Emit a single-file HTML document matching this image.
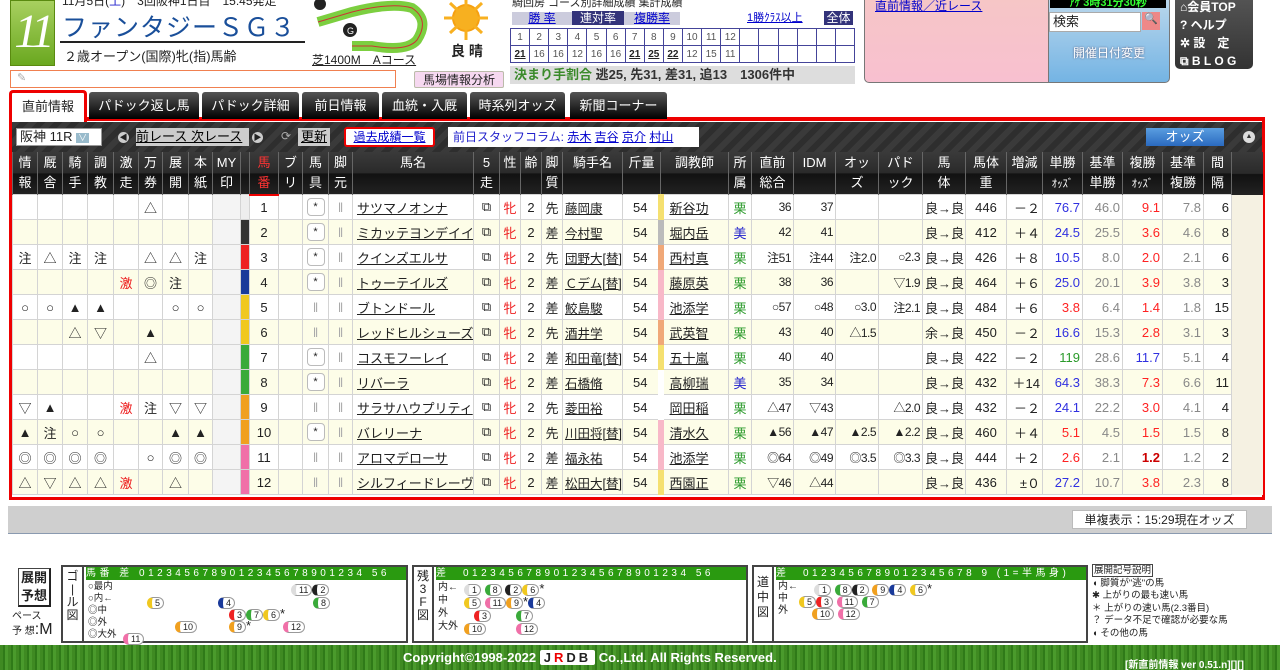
<!DOCTYPE html>
<html><head><meta charset="utf-8">
<style>
*{box-sizing:border-box;margin:0;padding:0}
body{width:1280px;height:670px;overflow:hidden;background:#fff;font-family:"Liberation Sans","Noto Sans CJK JP",sans-serif;font-size:13px;color:#222;position:relative}
.a{position:absolute}
u,a{color:#0000cc}
table.m{position:absolute;left:12px;top:152px;width:1250px;border-collapse:collapse;table-layout:fixed}
table.m th{background:linear-gradient(#3a3a3a,#2a2a2a 50%,#111 52%,#222);color:#fff;font-weight:normal;font-size:13px;line-height:20px;height:42px;border-left:1px solid #666;vertical-align:top;padding-top:1px}
table.m td{height:25px;border:1px solid #d4d4d4;text-align:center;font-size:13px;white-space:nowrap;overflow:hidden;padding:0 2px}
tr.e td{background:#fdfde8}
td.my{background:#f4f4f4!important}
td.n{font-size:16px;color:#222}
td.nm{text-align:left!important;text-decoration:underline;padding-left:4px!important}
td.jk{text-align:left!important;text-decoration:underline;font-size:12.5px!important}
td.tr{text-align:left!important;text-decoration:underline;border-left:6px solid transparent!important;padding-left:6px!important}
td.r{text-align:right!important}
td.s{font-size:12px!important;letter-spacing:-0.5px}
.gu{display:inline-block;width:18px;height:18px;border:1px solid #bbb;border-radius:4px;font-size:11px;line-height:17px;background:#fff}
.ft{color:#aaa;font-size:9px}
.f{color:#e22}
.k{color:#2a9a2a}
.mi{color:#22c}
.b{color:#3030e0}.gy{color:#888}.rd{color:#f22}
td.bgz{background:#f5f1e2!important;border:none!important}
.tab{position:absolute;top:92px;height:27px;background:linear-gradient(#555,#222 60%,#000);color:#fff;font-size:13px;text-align:center;line-height:27px;border-radius:3px 3px 0 0}
.pill{display:inline-block;height:12px;border-radius:6px;border:1px solid #999;font-size:9px;line-height:10px;padding:0 3px;background:#fff;vertical-align:middle}
.gh{background:#2a9a10;color:#fff;font-size:10px;height:13px;line-height:13px;letter-spacing:3.5px;white-space:nowrap;overflow:hidden}
.panel{position:absolute;top:565px;height:78px;border:2px solid #444;background:#fff}
table.st{position:absolute;left:510px;top:28px;border-collapse:collapse;width:345px;table-layout:fixed;font-size:10px;color:#555}
table.st td{border:1px solid #449;text-align:center;height:17px;padding:0}
table.st td.bd{color:#222;font-weight:bold;text-decoration:underline}
</style></head><body>

<!-- race header -->
<div class="a" style="left:10px;top:0;width:45px;height:66px;background:linear-gradient(#a8d060,#6aa820);border:1px solid #5a8a10;color:#fff;font-size:48px;font-style:italic;text-align:center;line-height:62px;font-family:'Liberation Serif',serif;letter-spacing:-4px">11</div>
<div class="a" style="left:62px;top:-8px;font-size:12px">11月5日(<span style="color:#22c">土</span>)　3回阪神1日目　15:45発走</div>
<div class="a" style="left:62px;top:8px;font-size:25px;color:#1a4f9a;letter-spacing:1px">ファンタジーＳＧ３</div>
<div class="a" style="left:60px;top:41px;width:245px;height:2px;background:#222"></div>
<div class="a" style="left:64px;top:46px;font-size:13px">２歳オープン(国際)牝(指)馬齢</div>
<svg class="a" style="left:312px;top:0" width="122" height="56"><path d="M6 22 L40 12 Q80 2 100 8 Q118 20 105 40 Q95 52 60 46 L40 46" fill="none" stroke="#7ccf40" stroke-width="10"/><path d="M6 22 L40 12 Q80 2 100 8 Q118 20 105 40 Q95 52 60 46 L40 46" fill="none" stroke="#c33" stroke-width="1"/><circle cx="8" cy="4" r="6" fill="#222"/><circle cx="38" cy="30" r="7" fill="#222"/><text x="35" y="34" fill="#fff" font-size="9">G</text></svg>
<div class="a" style="left:312px;top:51px;font-size:12px;text-decoration:underline">芝1400M　Aコース</div>
<svg class="a" style="left:439px;top:0" width="55" height="44"><circle cx="27" cy="18" r="14" fill="#f6a010"/><g stroke="#f8b020" stroke-width="3"><line x1="27" y1="0" x2="27" y2="40"/><line x1="5" y1="18" x2="49" y2="18"/><line x1="11" y1="3" x2="43" y2="33"/><line x1="43" y1="3" x2="11" y2="33"/></g><circle cx="27" cy="18" r="12" fill="#f7b020"/></svg>
<div class="a" style="left:451px;top:41px;font-size:14px;font-weight:bold">良 晴</div>
<div class="a" style="left:10px;top:70px;width:386px;height:18px;border:1px solid #f08050;color:#aaa;font-size:11px;padding-left:6px">✎</div>
<div class="a" style="left:414px;top:71px;width:90px;height:17px;background:#f6d8f0;border:1px solid #bba;font-size:12px;text-align:center;line-height:16px;border-radius:2px">馬場情報分析</div>

<!-- stats -->
<div class="a" style="left:512px;top:-6px;font-size:11px">騎回房 コース別詳細成績 集計成績</div>
<div class="a" style="left:512px;top:12px;width:60px;height:13px;background:#ccd;font-size:12px;text-align:center;line-height:13px"><u>勝 率</u></div>
<div class="a" style="left:572px;top:11px;width:52px;height:14px;background:#33337a;color:#fff;font-size:12px;text-align:center;line-height:14px">連対率</div>
<div class="a" style="left:624px;top:12px;width:56px;height:13px;background:#ccd;font-size:12px;text-align:center;line-height:13px"><u>複勝率</u></div>
<div class="a" style="left:747px;top:9px;font-size:11px"><u>1勝ｸﾗｽ以上</u></div>
<div class="a" style="left:824px;top:11px;width:29px;height:14px;background:#33337a;color:#fff;font-size:12px;text-align:center;line-height:14px">全体</div>
<table class="st">
<tr><td>1</td><td>2</td><td>3</td><td>4</td><td>5</td><td>6</td><td>7</td><td>8</td><td>9</td><td>10</td><td>11</td><td>12</td><td></td><td></td><td></td><td></td><td></td><td></td></tr>
<tr><td class="bd">21</td><td>16</td><td>16</td><td>12</td><td>16</td><td>16</td><td class="bd">21</td><td class="bd">25</td><td class="bd">22</td><td>12</td><td>15</td><td>11</td><td></td><td></td><td></td><td></td><td></td><td></td></tr></table>
<div class="a" style="left:510px;top:66px;width:345px;height:18px;background:#ddd;font-size:13px;line-height:18px;padding-left:4px;font-weight:bold;color:#333"><span style="color:#3a8a2a">決まり手割合</span> 逃25, 先31, 差31, 追13　1306件中</div>

<!-- right panels -->
<div class="a" style="left:864px;top:-4px;width:185px;height:87px;background:linear-gradient(#f6c6c6,#f8c0d0);border:1px solid #777;border-radius:0 0 0 5px;font-size:12px;padding-left:10px"><u>直前情報／近レース</u></div>
<div class="a" style="left:1048px;top:-4px;width:122px;height:87px;background:linear-gradient(#bcd8ec,#74b4e4);border:1px solid #777;border-radius:0 0 5px 0"></div>
<div class="a" style="left:1050px;top:-6px;width:116px;height:14px;background:#000;color:#3f3;font-size:11px;text-align:center;font-weight:bold">ｱｹ 3時31分30秒</div>
<div class="a" style="left:1049px;top:12px;width:92px;height:20px;background:#fff;border:1px solid #aaa;font-size:13px;padding-left:3px;line-height:18px">検索</div>
<div class="a" style="left:1142px;top:12px;width:18px;height:18px;background:#e88;color:#fff;font-size:11px;text-align:center">🔍</div>
<div class="a" style="left:1050px;top:44px;width:118px;text-align:center;font-size:12px;color:#fff;text-shadow:0 0 2px #557">開催日付変更</div>
<div class="a" style="left:1175px;top:-4px;width:78px;height:73px;background:linear-gradient(#555,#333);border-radius:0 0 5px 5px;color:#fff;font-size:12px;font-weight:bold;line-height:18px;padding:2px 0 0 5px">⌂会員TOP<br>? ヘルプ<br>✲ 設　定<br>⧉ B L O G</div>

<!-- tabs -->
<div class="a" style="left:85px;top:117px;width:1180px;height:4px;background:#e00"></div>
<div class="a" style="left:9px;top:90px;width:78px;height:32px;border:3px solid #e00;border-bottom:none;background:#fff;border-radius:4px 4px 0 0;font-size:13px;text-align:center;line-height:28px">直前情報</div>
<div class="tab" style="left:89px;width:110px">パドック返し馬</div>
<div class="tab" style="left:202px;width:97px">パドック詳細</div>
<div class="tab" style="left:302px;width:77px">前日情報</div>
<div class="tab" style="left:382px;width:85px">血統・入厩</div>
<div class="tab" style="left:470px;width:95px">時系列オッズ</div>
<div class="tab" style="left:570px;width:97px">新聞コーナー</div>

<!-- main box -->
<div class="a" style="left:9px;top:119px;width:1256px;height:381px;border:3px solid #e00;border-top:none"></div>
<div class="a" style="left:12px;top:122px;width:1250px;height:30px;background:repeating-linear-gradient(135deg,#3a3a3a 0 6px,#2e2e2e 6px 12px)"></div>
<div class="a" style="left:16px;top:128px;width:86px;height:18px;background:#fff;border:1px solid #999;font-size:13px;line-height:16px;padding-left:3px">阪神 11R <span style="background:#9bc;color:#fff;font-size:9px;padding:0 2px">∨</span></div>
<div class="a" style="left:118px;top:132px;width:11px;height:11px;border-radius:6px;background:#ccc;font-size:8px;text-align:center;line-height:11px">◀</div>
<div class="a" style="left:136px;top:128px;width:113px;height:18px;background:#ccc;font-size:13px;line-height:18px;text-decoration:underline;color:#000">前レース 次レース</div>
<div class="a" style="left:252px;top:132px;width:11px;height:11px;border-radius:6px;background:#ccc;font-size:8px;text-align:center;line-height:11px">▶</div>
<div class="a" style="left:281px;top:129px;color:#aaa;font-size:12px">⟳</div>
<div class="a" style="left:298px;top:128px;width:32px;height:18px;background:#ccc;font-size:13px;line-height:18px;text-align:center;text-decoration:underline;color:#000">更新</div>
<div class="a" style="left:344px;top:127px;width:91px;height:20px;background:#fff;border:2px solid #e00;border-radius:3px;font-size:12px;line-height:16px;text-align:center"><u>過去成績一覧</u></div>
<div class="a" style="left:448px;top:127px;width:251px;height:20px;background:#fff;font-size:12px;line-height:20px;padding-left:5px;color:#22c">前日スタッフコラム: <u>赤木</u>  <u>吉谷</u>  <u>京介</u>  <u>村山</u></div>
<div class="a" style="left:1146px;top:128px;width:78px;height:18px;background:linear-gradient(#5a9ee0,#2a6ac0);color:#fff;font-size:13px;text-align:center;line-height:18px">オッズ</div>
<div class="a" style="left:1243px;top:131px;width:12px;height:12px;border-radius:6px;background:#ddd;font-size:7px;text-align:center;line-height:12px;color:#333">▲</div>

<table class="m">
<colgroup><col style="width:25px"><col style="width:25px"><col style="width:25px"><col style="width:26px"><col style="width:25px"><col style="width:24px"><col style="width:26px"><col style="width:24px"><col style="width:28px"><col style="width:9px"><col style="width:29px"><col style="width:24px"><col style="width:26px"><col style="width:24px"><col style="width:121px"><col style="width:26px"><col style="width:21px"><col style="width:21px"><col style="width:21px"><col style="width:60px"><col style="width:38px"><col style="width:68px"><col style="width:23px"><col style="width:42px"><col style="width:42px"><col style="width:43px"><col style="width:44px"><col style="width:43px"><col style="width:41px"><col style="width:36px"><col style="width:40px"><col style="width:40px"><col style="width:40px"><col style="width:41px"><col style="width:28px"><col style="width:31px"></colgroup>
<tr><th>情<br>報</th><th>厩<br>舎</th><th>騎<br>手</th><th>調<br>教</th><th>激<br>走</th><th>万<br>券</th><th>展<br>開</th><th>本<br>紙</th><th>MY<br>印</th><th></th><th style="color:#f33;border-bottom:2px solid #e00">馬<br>番</th><th>ブ<br>リ</th><th>馬<br>具</th><th>脚<br>元</th><th>馬名</th><th>5<br>走</th><th>性</th><th>齢</th><th>脚<br>質</th><th>騎手名</th><th>斤量</th><th>調教師</th><th>所<br>属</th><th>直前<br>総合</th><th>IDM</th><th>オッ<br>ズ</th><th>パド<br>ック</th><th>馬<br>体</th><th>馬体<br>重</th><th>増減</th><th>単勝<br><small>ｵｯｽﾞ</small></th><th>基準<br>単勝</th><th>複勝<br><small>ｵｯｽﾞ</small></th><th>基準<br>複勝</th><th>間<br>隔</th><th></th></tr>

<tr><td></td><td></td><td></td><td></td><td></td><td>△</td><td></td><td></td><td class="my"></td><td style="background:#eee"></td><td class="n">1</td><td></td><td><span class="gu">*</span></td><td class="ft">‖</td><td class="nm">サツマノオンナ</td><td>⧉</td><td class="f">牝</td><td>2</td><td>先</td><td class="jk">藤岡康</td><td>54</td><td class="tr" style="border-left-color:#f5e070!important">新谷功</td><td class="k">栗</td><td class="r s">36</td><td class="r s">37</td><td></td><td></td><td>良→良</td><td>446</td><td class="r">－２</td><td class="r b">76.7</td><td class="r gy">46.0</td><td class="r rd">9.1</td><td class="r gy">7.8</td><td class="r">6</td><td class="bgz"></td></tr>

<tr class="e"><td></td><td></td><td></td><td></td><td></td><td></td><td></td><td></td><td class="my"></td><td style="background:#333"></td><td class="n">2</td><td></td><td><span class="gu">*</span></td><td class="ft">‖</td><td class="nm">ミカッテヨンデイイ</td><td>⧉</td><td class="f">牝</td><td>2</td><td>差</td><td class="jk">今村聖</td><td>54</td><td class="tr" style="border-left-color:#bbb!important">堀内岳</td><td class="mi">美</td><td class="r s">42</td><td class="r s">41</td><td></td><td></td><td>良→良</td><td>412</td><td class="r">＋４</td><td class="r b">24.5</td><td class="r gy">25.5</td><td class="r rd">3.6</td><td class="r gy">4.6</td><td class="r">8</td><td class="bgz"></td></tr>

<tr><td>注</td><td>△</td><td>注</td><td>注</td><td></td><td>△</td><td>△</td><td>注</td><td class="my"></td><td style="background:#e22"></td><td class="n">3</td><td></td><td><span class="gu">*</span></td><td class="ft">‖</td><td class="nm">クインズエルサ</td><td>⧉</td><td class="f">牝</td><td>2</td><td>先</td><td class="jk">団野大[替]</td><td>54</td><td class="tr" style="border-left-color:#f0a878!important">西村真</td><td class="k">栗</td><td class="r s">注51</td><td class="r s">注44</td><td class="r s">注2.0</td><td class="r s">○2.3</td><td>良→良</td><td>426</td><td class="r">＋８</td><td class="r b">10.5</td><td class="r gy">8.0</td><td class="r rd">2.0</td><td class="r gy">2.1</td><td class="r">6</td><td class="bgz"></td></tr>

<tr class="e"><td></td><td></td><td></td><td></td><td class="f">激</td><td>◎</td><td>注</td><td></td><td class="my"></td><td style="background:#1a3a9a"></td><td class="n">4</td><td></td><td><span class="gu">*</span></td><td class="ft">‖</td><td class="nm">トゥーテイルズ</td><td>⧉</td><td class="f">牝</td><td>2</td><td>差</td><td class="jk">Ｃデム[替]</td><td>54</td><td class="tr" style="border-left-color:#f8b8c8!important">藤原英</td><td class="k">栗</td><td class="r s">38</td><td class="r s">36</td><td></td><td class="r s">▽1.9</td><td>良→良</td><td>464</td><td class="r">＋６</td><td class="r b">25.0</td><td class="r gy">20.1</td><td class="r rd">3.9</td><td class="r gy">3.8</td><td class="r">3</td><td class="bgz"></td></tr>

<tr><td>○</td><td>○</td><td>▲</td><td>▲</td><td></td><td></td><td>○</td><td>○</td><td class="my"></td><td style="background:#f0c820"></td><td class="n">5</td><td></td><td class="ft">‖</td><td class="ft">‖</td><td class="nm">ブトンドール</td><td>⧉</td><td class="f">牝</td><td>2</td><td>差</td><td class="jk">鮫島駿</td><td>54</td><td class="tr" style="border-left-color:#f8b8c8!important">池添学</td><td class="k">栗</td><td class="r s">○57</td><td class="r s">○48</td><td class="r s">○3.0</td><td class="r s">注2.1</td><td>良→良</td><td>484</td><td class="r">＋６</td><td class="r rd">3.8</td><td class="r gy">6.4</td><td class="r rd">1.4</td><td class="r gy">1.8</td><td class="r">15</td><td class="bgz"></td></tr>

<tr class="e"><td></td><td></td><td>△</td><td>▽</td><td></td><td>▲</td><td></td><td></td><td class="my"></td><td style="background:#f0c820"></td><td class="n">6</td><td></td><td class="ft">‖</td><td class="ft">‖</td><td class="nm">レッドヒルシューズ</td><td>⧉</td><td class="f">牝</td><td>2</td><td>先</td><td class="jk">酒井学</td><td>54</td><td class="tr" style="border-left-color:#f0a878!important">武英智</td><td class="k">栗</td><td class="r s">43</td><td class="r s">40</td><td class="r s">△1.5</td><td></td><td>余→良</td><td>450</td><td class="r">－２</td><td class="r b">16.6</td><td class="r gy">15.3</td><td class="r rd">2.8</td><td class="r gy">3.1</td><td class="r">3</td><td class="bgz"></td></tr>

<tr><td></td><td></td><td></td><td></td><td></td><td>△</td><td></td><td></td><td class="my"></td><td style="background:#3aaa3a"></td><td class="n">7</td><td></td><td><span class="gu">*</span></td><td class="ft">‖</td><td class="nm">コスモフーレイ</td><td>⧉</td><td class="f">牝</td><td>2</td><td>差</td><td class="jk">和田竜[替]</td><td>54</td><td class="tr" style="border-left-color:#f5e070!important">五十嵐</td><td class="k">栗</td><td class="r s">40</td><td class="r s">40</td><td></td><td></td><td>良→良</td><td>422</td><td class="r">－２</td><td class="r" style="color:#2a9a2a">119</td><td class="r gy">28.6</td><td class="r b">11.7</td><td class="r gy">5.1</td><td class="r">4</td><td class="bgz"></td></tr>

<tr class="e"><td></td><td></td><td></td><td></td><td></td><td></td><td></td><td></td><td class="my"></td><td style="background:#3aaa3a"></td><td class="n">8</td><td></td><td><span class="gu">*</span></td><td class="ft">‖</td><td class="nm">リバーラ</td><td>⧉</td><td class="f">牝</td><td>2</td><td>差</td><td class="jk">石橋脩</td><td>54</td><td class="tr">高柳瑞</td><td class="mi">美</td><td class="r s">35</td><td class="r s">34</td><td></td><td></td><td>良→良</td><td>432</td><td class="r">＋14</td><td class="r b">64.3</td><td class="r gy">38.3</td><td class="r rd">7.3</td><td class="r gy">6.6</td><td class="r">11</td><td class="bgz"></td></tr>

<tr><td>▽</td><td>▲</td><td></td><td></td><td class="f">激</td><td>注</td><td>▽</td><td>▽</td><td class="my"></td><td style="background:#f0a020"></td><td class="n">9</td><td></td><td class="ft">‖</td><td class="ft">‖</td><td class="nm">サラサハウプリティ</td><td>⧉</td><td class="f">牝</td><td>2</td><td>先</td><td class="jk">菱田裕</td><td>54</td><td class="tr">岡田稲</td><td class="k">栗</td><td class="r s">△47</td><td class="r s">▽43</td><td></td><td class="r s">△2.0</td><td>良→良</td><td>432</td><td class="r">－２</td><td class="r b">24.1</td><td class="r gy">22.2</td><td class="r rd">3.0</td><td class="r gy">4.1</td><td class="r">4</td><td class="bgz"></td></tr>

<tr class="e"><td>▲</td><td>注</td><td>○</td><td>○</td><td></td><td></td><td>▲</td><td>▲</td><td class="my"></td><td style="background:#f0a020"></td><td class="n">10</td><td></td><td><span class="gu">*</span></td><td class="ft">‖</td><td class="nm">バレリーナ</td><td>⧉</td><td class="f">牝</td><td>2</td><td>先</td><td class="jk">川田将[替]</td><td>54</td><td class="tr" style="border-left-color:#f8b8c8!important">清水久</td><td class="k">栗</td><td class="r s">▲56</td><td class="r s">▲47</td><td class="r s">▲2.5</td><td class="r s">▲2.2</td><td>良→良</td><td>460</td><td class="r">＋４</td><td class="r rd">5.1</td><td class="r gy">4.5</td><td class="r rd">1.5</td><td class="r gy">1.5</td><td class="r">8</td><td class="bgz"></td></tr>

<tr><td>◎</td><td>◎</td><td>◎</td><td>◎</td><td></td><td>○</td><td>◎</td><td>◎</td><td class="my"></td><td style="background:#f070a8"></td><td class="n">11</td><td></td><td class="ft">‖</td><td class="ft">‖</td><td class="nm">アロマデローサ</td><td>⧉</td><td class="f">牝</td><td>2</td><td>差</td><td class="jk">福永祐</td><td>54</td><td class="tr" style="border-left-color:#f8b8c8!important">池添学</td><td class="k">栗</td><td class="r s">◎64</td><td class="r s">◎49</td><td class="r s">◎3.5</td><td class="r s">◎3.3</td><td>良→良</td><td>444</td><td class="r">＋２</td><td class="r rd">2.6</td><td class="r gy">2.1</td><td class="r" style="color:#c00;font-weight:bold">1.2</td><td class="r gy">1.2</td><td class="r">2</td><td class="bgz"></td></tr>

<tr class="e"><td>△</td><td>▽</td><td>△</td><td>△</td><td class="f">激</td><td></td><td>△</td><td></td><td class="my"></td><td style="background:#f070a8"></td><td class="n">12</td><td></td><td class="ft">‖</td><td class="ft">‖</td><td class="nm">シルフィードレーヴ</td><td>⧉</td><td class="f">牝</td><td>2</td><td>差</td><td class="jk">松田大[替]</td><td>54</td><td class="tr" style="border-left-color:#f5e070!important">西園正</td><td class="k">栗</td><td class="r s">▽46</td><td class="r s">△44</td><td></td><td></td><td>良→良</td><td>436</td><td class="r">±０</td><td class="r b">27.2</td><td class="r gy">10.7</td><td class="r rd">3.8</td><td class="r gy">2.3</td><td class="r">8</td><td class="bgz"></td></tr>
</table>

<!-- bottom bar -->
<div class="a" style="left:8px;top:506px;width:1264px;height:28px;background:#cfcfcf;border-bottom:1px solid #8a9ab0"></div>
<div class="a" style="left:1072px;top:510px;width:175px;height:19px;background:#fff;border:1px solid #bbb;font-size:12px;text-align:center;line-height:18px">単複表示：15:29現在オッズ</div>

<!-- tenkai -->
<div class="a" style="left:18px;top:568px;width:33px;height:39px;border:1px solid #444;border-right:2px solid #222;border-bottom:2px solid #222;font-size:13px;font-weight:bold;text-align:center;line-height:18px;background:#fff">展開<br>予想</div>
<div class="a" style="left:12px;top:610px;font-size:10px;line-height:13px">ペース<br>予 想<span style="font-size:16px">:M</span></div>

<div class="panel" style="left:61px;width:347px">
 <div class="a" style="left:0;top:0;width:21px;height:74px;border-right:2px solid #444;font-size:12px;text-align:center;line-height:13px;padding-top:3px">ゴ<br>|<br>ル<br>図</div>
 <div class="a gh" style="left:23px;top:0;width:320px">馬番 差 0123456789012345678901234 56</div>
 <div class="a" style="left:25px;top:14px;font-size:9.5px;line-height:12px">○最内<br>○内←<br>◎中<br>◎外<br>◎大外</div>
 <div class="a" style="left:228px;top:14px"><span class="pill" style="border-left:5px solid #ddd">11</span><span class="pill" style="border-left:5px solid #222">2</span></div>
 <div class="a" style="left:84px;top:27px"><span class="pill" style="border-left:5px solid #f0c820">5</span></div>
 <div class="a" style="left:155px;top:27px"><span class="pill" style="border-left:5px solid #1a3a9a">4</span></div>
 <div class="a" style="left:250px;top:27px"><span class="pill" style="border-left:5px solid #3aaa3a">8</span></div>
 <div class="a" style="left:166px;top:39px"><span class="pill" style="border-left:5px solid #e22">3</span><span class="pill" style="border-left:5px solid #3aaa3a">7</span><span class="pill" style="border-left:5px solid #f0c820">6</span>*</div>
 <div class="a" style="left:112px;top:51px"><span class="pill" style="border-left:5px solid #f0a020">10</span></div>
 <div class="a" style="left:166px;top:51px"><span class="pill" style="border-left:5px solid #f0a020">9</span>*</div>
 <div class="a" style="left:220px;top:51px"><span class="pill" style="border-left:5px solid #f070a8">12</span></div>
 <div class="a" style="left:60px;top:63px"><span class="pill" style="border-left:5px solid #f070a8">11</span></div>
</div>

<div class="panel" style="left:412px;width:336px">
 <div class="a" style="left:0;top:0;width:20px;height:74px;border-right:2px solid #444;font-size:12px;text-align:center;line-height:13px;padding-top:3px">残<br>3<br>F<br>図</div>
 <div class="a gh" style="left:22px;top:0;width:310px">差　0123456789012345678901234 56</div>
 <div class="a" style="left:24px;top:14px;font-size:10px;line-height:13px">内←<br>中<br>外<br>大外</div>
 <div class="a" style="left:50px;top:14px"><span class="pill" style="border-left:5px solid #ddd">1</span> <span class="pill" style="border-left:5px solid #3aaa3a">8</span> <span class="pill" style="border-left:5px solid #222">2</span><span class="pill" style="border-left:5px solid #f0c820">6</span>*</div>
 <div class="a" style="left:50px;top:27px"><span class="pill" style="border-left:5px solid #f0c820">5</span> <span class="pill" style="border-left:5px solid #f070a8">11</span><span class="pill" style="border-left:5px solid #f0a020">9</span>*<span class="pill" style="border-left:5px solid #1a3a9a">4</span></div>
 <div class="a" style="left:60px;top:40px"><span class="pill" style="border-left:5px solid #e22">3</span></div>
 <div class="a" style="left:102px;top:40px"><span class="pill" style="border-left:5px solid #3aaa3a">7</span></div>
 <div class="a" style="left:50px;top:53px"><span class="pill" style="border-left:5px solid #f0a020">10</span></div>
 <div class="a" style="left:102px;top:53px"><span class="pill" style="border-left:5px solid #f070a8">12</span></div>
</div>

<div class="panel" style="left:752px;width:336px">
 <div class="a" style="left:0;top:0;width:20px;height:74px;border-right:2px solid #444;font-size:12px;text-align:center;line-height:15px;padding-top:8px">道<br>中<br>図</div>
 <div class="a gh" style="left:22px;top:0;width:310px">差　0123456789012345678 9 (1=半馬身)</div>
 <div class="a" style="left:24px;top:14px;font-size:10px;line-height:12px">内←<br>中<br>外</div>
 <div class="a" style="left:60px;top:14px"><span class="pill" style="border-left:5px solid #ddd">1</span> <span class="pill" style="border-left:5px solid #3aaa3a">8</span><span class="pill" style="border-left:5px solid #222">2</span> <span class="pill" style="border-left:5px solid #f0a020">9</span><span class="pill" style="border-left:5px solid #1a3a9a">4</span> <span class="pill" style="border-left:5px solid #f0c820">6</span>*</div>
 <div class="a" style="left:45px;top:26px"><span class="pill" style="border-left:5px solid #f0c820">5</span><span class="pill" style="border-left:5px solid #e22">3</span> <span class="pill" style="border-left:5px solid #f070a8">11</span> <span class="pill" style="border-left:5px solid #3aaa3a">7</span></div>
 <div class="a" style="left:58px;top:38px"><span class="pill" style="border-left:5px solid #f0a020">10</span> <span class="pill" style="border-left:5px solid #f070a8">12</span></div>
</div>

<div class="a" style="left:1092px;top:565px;font-size:9.5px;line-height:12.5px;white-space:nowrap"><span style="border:1px solid #444;padding:0 1px">展開記号説明</span><br>◖ 脚質が"逃"の馬<br>✱ 上がりの最も速い馬<br>＊ 上がりの速い馬(2.3番目)<br>？ データ不足で確認が必要な馬<br>◖ その他の馬</div>

<!-- footer -->
<div class="a" style="left:0;top:645px;width:1280px;height:25px;background:repeating-linear-gradient(90deg,#3f8a22 0 3px,#2f7a18 3px 5px,#4a9a2c 5px 8px)"></div>
<div class="a" style="left:403px;top:650px;color:#fff;font-size:13px;font-weight:bold;white-space:nowrap">Copyright©1998-2022 <span style="background:#fff;color:#222;padding:0 4px;border-radius:2px;letter-spacing:3px">J<span style="color:#e00">R</span>DB</span> Co.,Ltd. All Rights Reserved.</div>
<div class="a" style="left:1125px;top:656px;color:#fff;font-size:10px;font-weight:bold">[新直前情報 ver 0.51.n][][]</div>
</body></html>
